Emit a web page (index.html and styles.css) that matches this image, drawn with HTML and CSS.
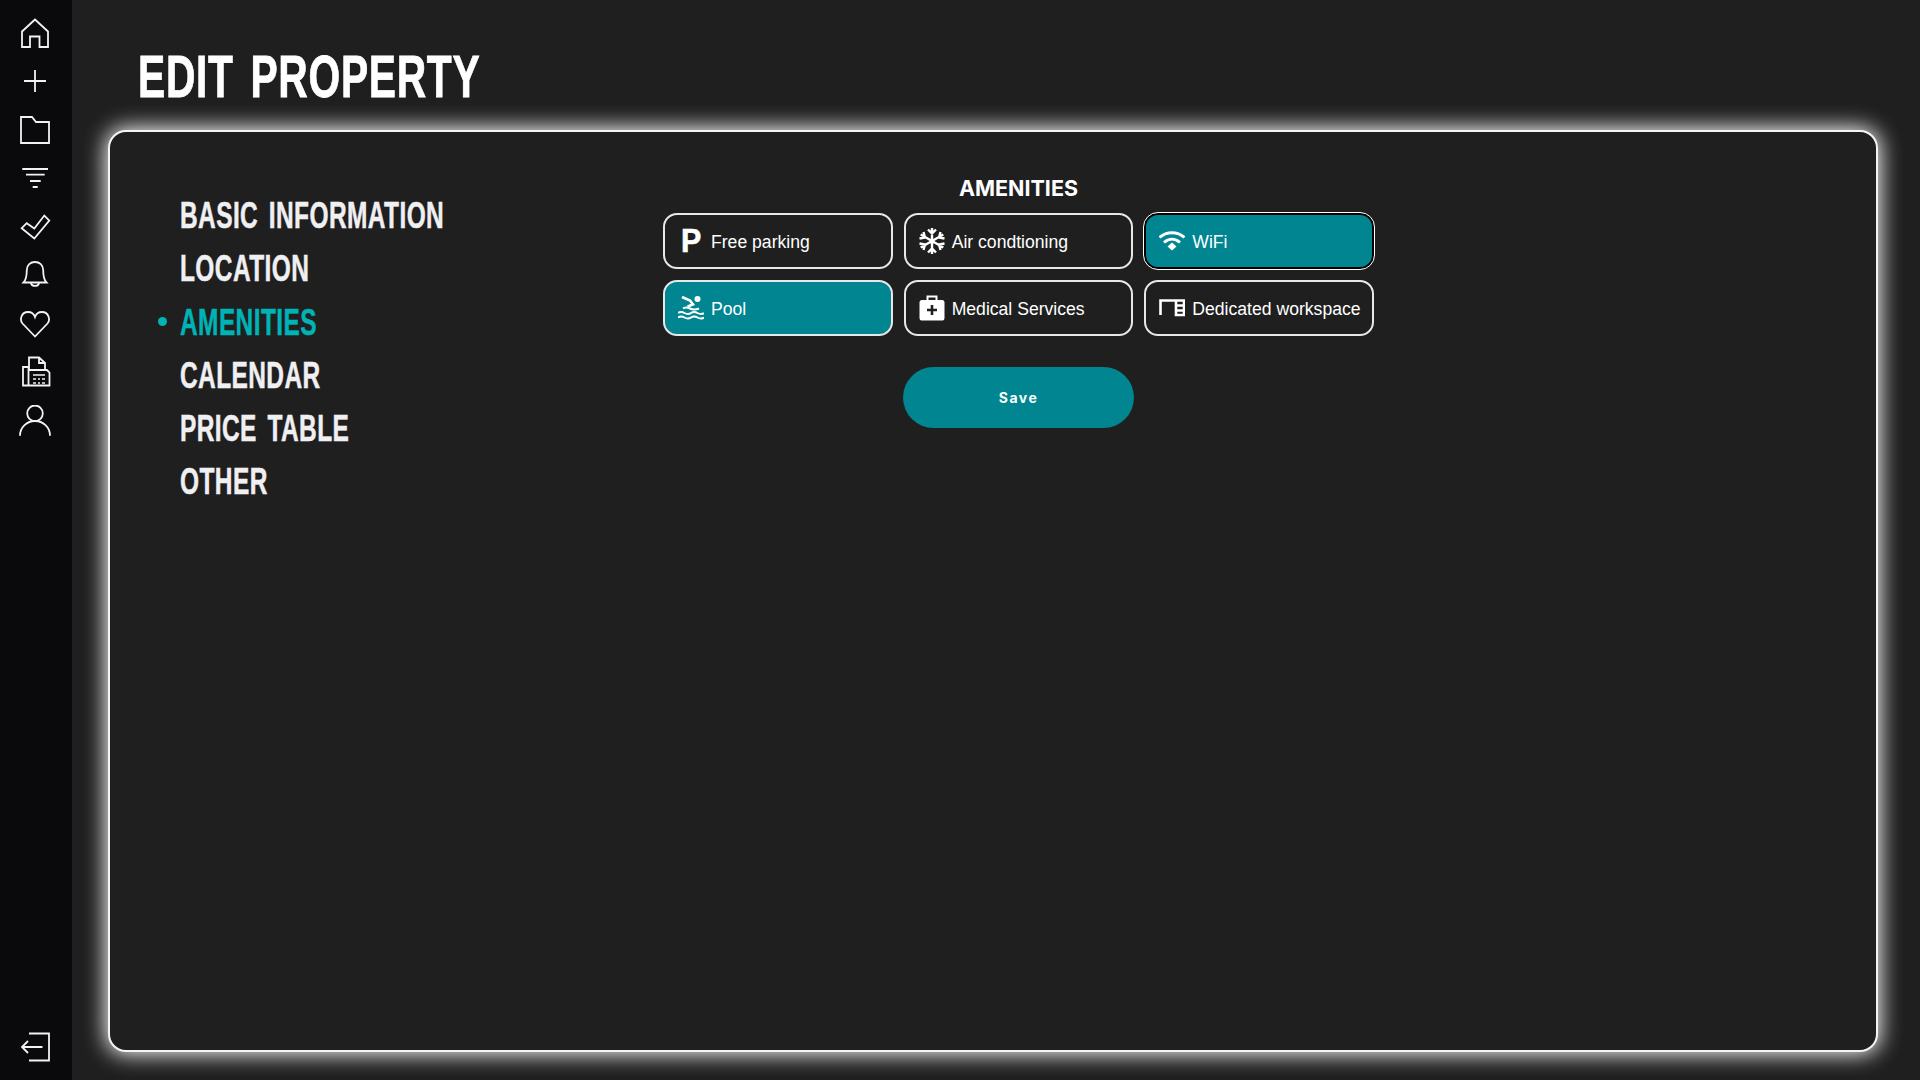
FILE: index.html
```html
<!DOCTYPE html>
<html lang="en">
<head>
<meta charset="utf-8">
<title>Edit property</title>
<link rel="stylesheet" href="styles.css">
</head>
<body>
<aside class="sidebar">
  <nav class="side-top">
    <svg class="side-icon" viewBox="0 0 32 32"><path d="M16 2.500 3 14.500V30h8V19.500h9.500V30H29V14.500Z"/></svg>
    <svg class="side-icon" viewBox="0 0 32 32"><path d="M5 16H27M16 5V27"/></svg>
    <svg class="side-icon" viewBox="0 0 32 32"><path d="M2 3H13L17 8H30V29H2Z"/></svg>
    <svg class="side-icon" viewBox="0 0 32 32"><path d="M3.300 7H29M7 12.700H25.700M11 19H21.700M13.700 25H18.700"/></svg>
    <svg class="side-icon" viewBox="0 0 32 32"><path d="M2.700 17.200 15.300 27.500 30.300 9.500 25.300 4.500 15.300 17.500 7.700 12.200Z"/></svg>
    <svg class="side-icon" viewBox="0 0 32 32"><path d="M4.500 23.500C7 21 7.800 18 7.800 11 7.800 6 11.500 3 16 3S24.200 6 24.200 11C24.200 18 25 21 27.500 23.500ZM11.700 23.500A4.400 4.400 0 0 0 20.300 23.500"/></svg>
    <svg class="side-icon" viewBox="0 0 32 32"><path d="M16 28.500 3.500 15.500C.5 12 2 4 9 4 12.500 4 15 6 16 9 17 6 19.500 4 23 4 30 4 31.500 12 28.500 15.500Z"/></svg>
    <svg class="side-icon" viewBox="0 0 32 32"><path d="M10 14V1.500H20L26 7V14M20 1.500V7H26M4 11H9.500V29.500H4ZM9.500 14H28L30.500 16.500V29.500H9.500"/><path class="dots" d="M14 19H26M14 23H17M19 23H21M23 23H26M14 27H17M19 27H21M23 27H26"/></svg>
    <svg class="side-icon" viewBox="0 0 32 32"><circle cx="16" cy="8.300" r="7.800"/><path d="M1 30.700C1 22 8 16 16 16S31 22 31 30.700"/></svg>
  </nav>
  <svg class="side-icon" viewBox="0 0 32 32"><path d="M10 2.500H30V29.500H10M23.500 16H3M9 10 3 16 9 22"/></svg>
</aside>

<main class="main">
  <h1 class="title"><span class="squeeze">EDIT PROPERTY</span></h1>
  <section class="panel">
    <ul class="steps">
      <li class="step"><span class="squeeze">BASIC INFORMATION</span></li>
      <li class="step"><span class="squeeze">LOCATION</span></li>
      <li class="step step-active"><span class="squeeze">AMENITIES</span></li>
      <li class="step"><span class="squeeze">CALENDAR</span></li>
      <li class="step"><span class="squeeze">PRICE TABLE</span></li>
      <li class="step"><span class="squeeze">OTHER</span></li>
    </ul>
    <div class="amenities">
      <h2 class="am-title">AMENITIES</h2>
      <div class="am-grid">
        <button class="am"><span class="am-icon am-p"><span class="am-p-glyph">P</span></span><span class="am-label">Free parking</span></button>
        <button class="am">
          <svg class="am-icon" viewBox="0 0 26 26"><path class="thick snow" d="M13 0V26M1.700 6.500 24.300 19.500M1.700 19.500 24.300 6.500M9 1.500 13 5.500 17 1.500M9 24.500 13 20.500 17 24.500M.5 10.500 6 9.500 4.500 4M25.500 15.500 20 16.500 21.500 22M.5 15.500 6 16.500 4.500 22M25.500 10.500 20 9.500 21.500 4"/></svg>
          <span class="am-label">Air condtioning</span></button>
        <button class="am am-on am-focus">
          <svg class="am-icon" viewBox="0 0 26 26"><path class="thick wide" d="M.5 9.500C7.500 3 18.500 3 25.500 9.500M5 14.500C10 10 16 10 21 14.500"/><path class="solid" d="M13 14.500 17.500 18.500 13 22.500 8.500 18.500Z"/></svg>
          <span class="am-label">WiFi</span></button>
        <button class="am am-on">
          <svg class="am-icon" viewBox="0 0 26 26"><circle class="solid" cx="19.500" cy="4" r="3"/><path class="thick" d="M4 2 12 5.500 15 9.500 9.500 11.500"/><path class="thick thin" d="M5 13.500Q8 11.500 12 13.500T21 13.500M0 18Q3 16 6.500 18T13 18T19.500 18T26 18M0 22.500Q3 20.500 6.500 22.500T13 22.500T19.500 22.500T26 22.500"/></svg>
          <span class="am-label">Pool</span></button>
        <button class="am">
          <svg class="am-icon" viewBox="0 0 26 26"><path class="thick thin" d="M8.500 6V1.500H17.500V6"/><path class="solid" d="M2.500 5H23.500Q25.500 5 25.500 7.500V23Q25.500 25.500 23.500 25.500H2.500Q.5 25.500 .5 23V7.500Q.5 5 2.500 5Z"/><path class="cut" d="M13 10V20M8 15H18"/></svg>
          <span class="am-label">Medical Services</span></button>
        <button class="am">
          <svg class="am-icon" viewBox="0 0 26 26"><path class="thick" d="M1.500 20V5.500H25V20H17V5.500M11.500 5.500H17M17 10.500H25M17 15.500H25"/></svg>
          <span class="am-label">Dedicated workspace</span></button>
      </div>
      <button class="save">Save</button>
    </div>
  </section>
</main>
</body>
</html>
```

FILE: styles.css
```css
* { box-sizing: border-box; }
html, body { margin: 0; height: 100%; }
body {
  display: flex;
  height: 1080px;
  overflow: hidden;
  background: #1f1f1f;
  color: #fff;
  font-family: "Liberation Sans", Arial, sans-serif;
}

.sidebar {
  flex: 0 0 72px;
  display: flex;
  flex-direction: column;
  justify-content: space-between;
  align-items: center;
  padding: 16.500px 2px 17px 0;
  background: #0a0a0c;
}
.side-top { display: flex; flex-direction: column; gap: 16.500px; }
.side-icon {
  display: block;
  width: 32px;
  height: 32px;
  fill: none;
  stroke: #f2f2f2;
  stroke-width: 1.800;
}
.side-icon .dots { stroke-width: 1.500; }

.main {
  flex: 1;
  display: flex;
  flex-direction: column;
  padding: 0 42px 28px 36px;
  min-width: 0;
}
.title {
  margin: 0 0 0 30px;
  height: 130px;
  padding-top: 44px;
  font: 700 60px/66px "Liberation Sans", sans-serif;
  letter-spacing: 1px;
  word-spacing: 7px;
  -webkit-text-stroke: .8px #fff;
  color: #fff;
}
.squeeze {
  display: inline-block;
  white-space: nowrap;
  transform: scaleX(.68);
  transform-origin: 0 50%;
}
.panel {
  flex: 1;
  display: flex;
  padding: 34px 0 0 70px;
  border: 2px solid #f4f4f4;
  border-radius: 18px;
  background: #1f1f1f;
  box-shadow: 0 0 22px 2px #fff;
}

.steps {
  flex: 0 0 483px;
  list-style: none;
  margin: 0;
  padding: 23px 0 0;
}
.step {
  position: relative;
  height: 53.300px;
  font: 700 36px/53.300px "Liberation Sans", sans-serif;
  letter-spacing: .6px;
  word-spacing: 5px;
  -webkit-text-stroke: .5px currentColor;
  color: #f0eff2;
}
.step-active { color: #00b3b5; }
.step-active::before {
  content: "";
  position: absolute;
  left: -22px;
  top: 21px;
  width: 9px;
  height: 9px;
  border-radius: 50%;
  background: #00b3b5;
}

.amenities {
  flex: 0 0 711px;
  display: flex;
  flex-direction: column;
  align-items: center;
}
.am-title {
  margin: 0;
  height: 47px;
  font: 700 21.500px/45px Inter, "Liberation Sans", sans-serif;
  color: #fff;
}
.am-grid {
  display: grid;
  grid-template-columns: repeat(3, 1fr);
  gap: 11px;
  width: 100%;
}
.am {
  display: flex;
  align-items: center;
  gap: 7px;
  height: 56px;
  padding: 0 0 0 13px;
  border: 2px solid #e8e8e8;
  border-radius: 14px;
  background: transparent;
  color: #fff;
  font: 400 17.600px/20px "Liberation Sans", Arial, sans-serif;
  white-space: nowrap;
}
.am-label { padding-top: 1px; }
.am-on { background: #008591; }
.am-focus {
  border: 2px solid #000;
  outline: 1px solid #fff;
}
.am-icon {
  flex: 0 0 26px;
  width: 26px;
  height: 26px;
  display: block;
}
.am-p {
  text-align: center;
  font: 700 33px/26px "Liberation Sans", Arial, sans-serif;
  -webkit-text-stroke: .6px #fff;
}
.am-p-glyph {
  display: inline-block;
  transform: scaleX(.92);
}
.thick { fill: none; stroke: #fff; stroke-width: 2.600; }
.thick.thin { stroke-width: 2; }
.thick.snow { stroke-width: 2.400; }
.thick.wide { stroke-width: 3; }
.solid { fill: #fff; }
.cut { fill: none; stroke: #1f1f1f; stroke-width: 2.600; }

.save {
  width: 231px;
  height: 61px;
  margin-top: 31px;
  border: 0;
  border-radius: 31px;
  background: #008591;
  color: #fff;
  font: 700 14px/1 Inter, "Liberation Sans", sans-serif;
  letter-spacing: 1.500px;
}
```
